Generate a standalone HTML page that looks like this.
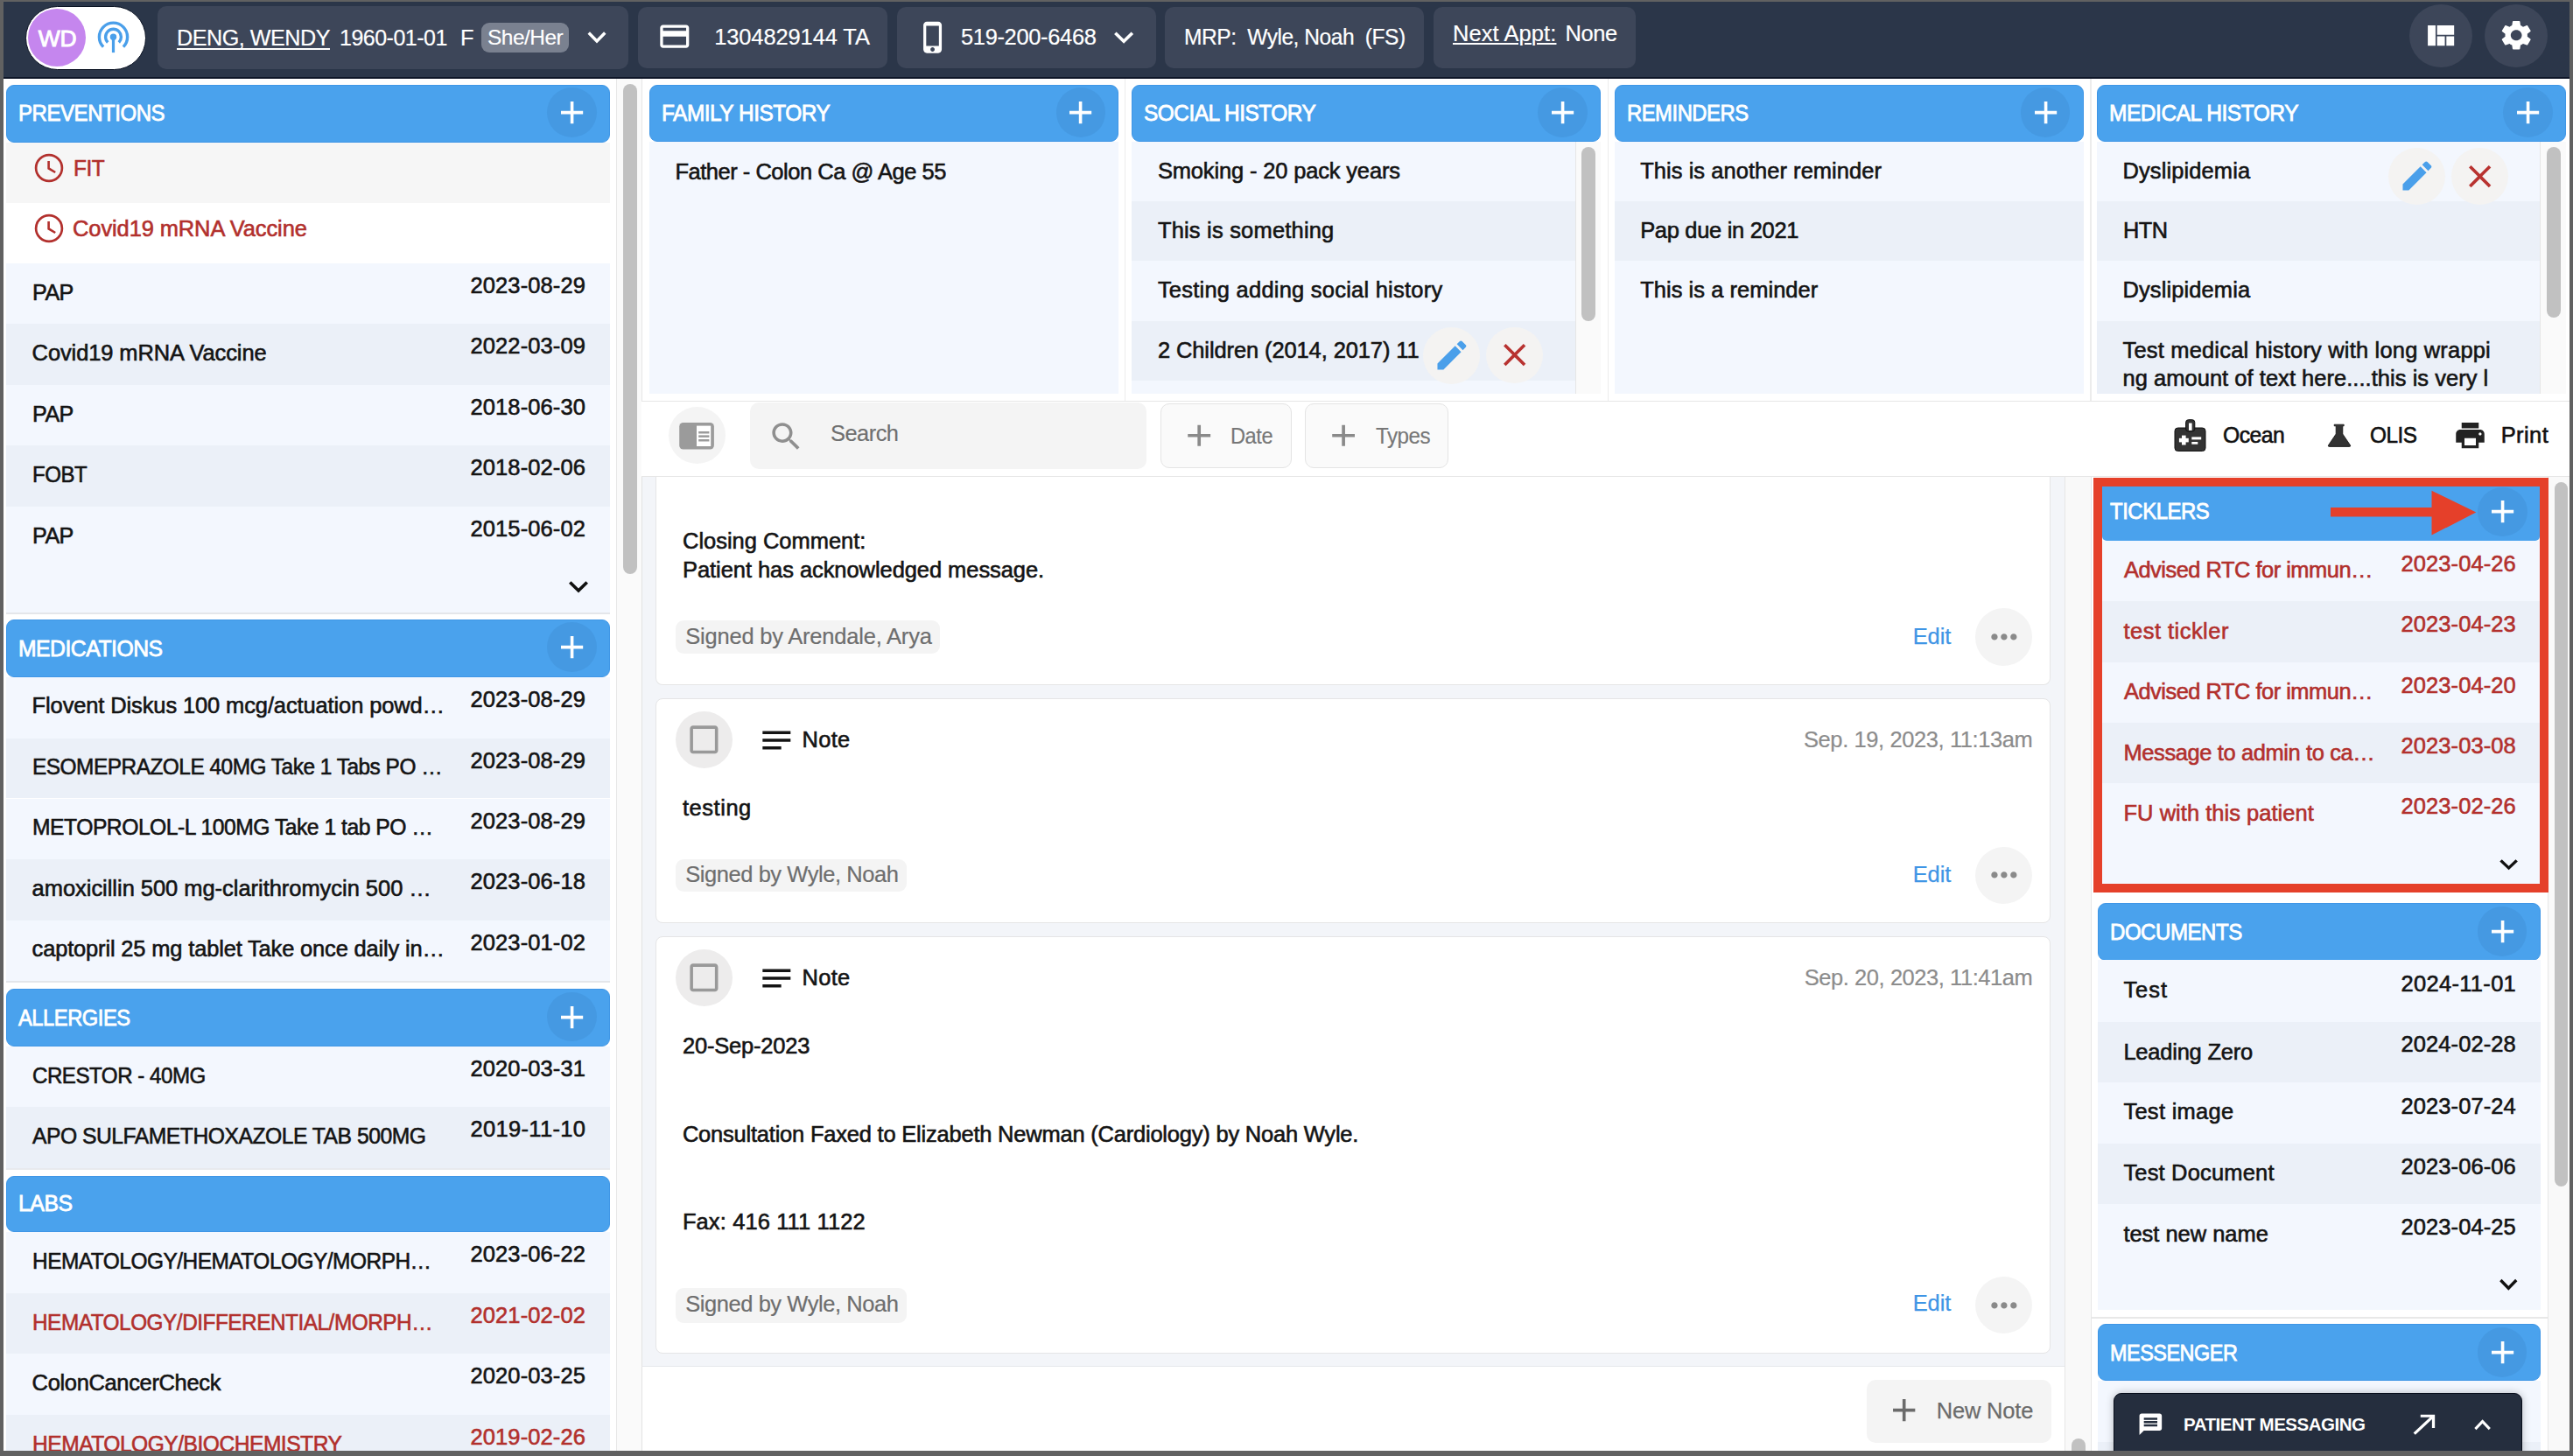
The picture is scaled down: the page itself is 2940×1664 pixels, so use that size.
<!DOCTYPE html><html><head><meta charset="utf-8"><style>*{box-sizing:border-box}html,body{margin:0;padding:0}body{width:2940px;height:1664px;overflow:hidden;position:relative;background:#616161;font-family:'Liberation Sans', sans-serif}
#app>div,#app>svg{position:absolute}.t{white-space:pre}</style></head><body><div id="app" style="position:absolute;left:0;top:0;width:2940px;height:1664px"><div style="left:0.00px;top:0.00px;width:2940.00px;height:1664.00px;background:#ffffff;"></div>
<div style="left:0.00px;top:0.00px;width:2940.00px;height:89.00px;background:#2b3649;"></div>
<div style="left:0.00px;top:88.00px;width:2940.00px;height:1.60px;background:#0e1628;"></div>
<div style="left:28.50px;top:6.50px;width:138.00px;height:73.00px;background:#ffffff;border-radius:37px;border:1px solid #0a1222;"></div>
<div style="left:32.00px;top:9.80px;width:66.00px;height:66.00px;background:#c586ee;border-radius:50%;"></div>
<div class="t" style="left:43.70px;top:30.71px;font-size:26.46px;line-height:26.46px;color:#ffffff;font-weight:400;-webkit-text-stroke:0.9px #ffffff;letter-spacing:-0.226px;">WD</div>
<svg style="left:105.00px;top:20.00px;width:50.00px;height:45.00px;overflow:visible;" viewBox="0 0 50.00 45.00"><g fill="none" stroke="#4a9fea" stroke-width="3.4"><path d="M 18.20 28.50 A 8.9 8.9 0 1 1 30.80 28.50"/><path d="M 13.10 33.60 A 16.1 16.1 0 1 1 35.90 33.60"/></g><circle cx="24.5" cy="22.2" r="3.7" fill="#4a9fea"/><rect x="22.9" y="22.2" width="3.2" height="17.9" fill="#4a9fea"/></svg>
<div style="left:180.00px;top:7.00px;width:537.50px;height:71.50px;background:#3d4659;border-radius:10px;"></div>
<div class="t" style="left:202.30px;top:30.94px;font-size:25.48px;line-height:25.48px;color:#ffffff;font-weight:400;-webkit-text-stroke:0.2px #ffffff;letter-spacing:-0.500px;transform:scaleX(0.9883);transform-origin:0 0;text-decoration:underline;text-decoration-thickness:2px;text-underline-offset:3px;">DENG, WENDY</div>
<div class="t" style="left:388.40px;top:30.64px;font-size:25.48px;line-height:25.48px;color:#ffffff;font-weight:400;-webkit-text-stroke:0.2px #ffffff;letter-spacing:-0.500px;transform:scaleX(0.9807);transform-origin:0 0;">1960-01-01</div>
<div class="t" style="left:526.00px;top:30.64px;font-size:25.48px;line-height:25.48px;color:#ffffff;font-weight:400;-webkit-text-stroke:0.2px #ffffff;">F</div>
<div style="left:550.00px;top:26.00px;width:100.00px;height:34.00px;background:#7a8190;border-radius:9px;"></div>
<div class="t" style="left:557.00px;top:31.47px;font-size:24.5px;line-height:24.5px;color:#ffffff;font-weight:400;-webkit-text-stroke:0.15px #ffffff;letter-spacing:-0.500px;transform:scaleX(0.9979);transform-origin:0 0;">She/Her</div>
<svg style="left:661.30px;top:21.20px;width:42.00px;height:42.75px;" viewBox="0 0 24 24" preserveAspectRatio="none"><path d="M16.59 8.59L12 13.17 7.41 8.59 6 10l6 6 6-6z" fill="#ffffff"/></svg>
<div style="left:729.00px;top:7.60px;width:284.50px;height:70.50px;background:#3d4659;border-radius:10px;"></div>
<svg style="left:750.70px;top:21.73px;width:39.60px;height:39.45px;" viewBox="0 0 24 24" preserveAspectRatio="none"><path d="M20 4H4c-1.11 0-1.99.89-1.99 2L2 18c0 1.11.89 2 2 2h16c1.11 0 2-.89 2-2V6c0-1.11-.89-2-2-2zm0 14H4v-6h16v6zm0-10H4V6h16v2z" fill="#ffffff"/></svg>
<div class="t" style="left:816.20px;top:29.94px;font-size:25.48px;line-height:25.48px;color:#ffffff;font-weight:400;-webkit-text-stroke:0.2px #ffffff;letter-spacing:-0.103px;">1304829144 TA</div>
<div style="left:1025.00px;top:7.60px;width:296.00px;height:70.50px;background:#3d4659;border-radius:10px;"></div>
<svg style="left:1046.72px;top:22.86px;width:38.77px;height:39.27px;" viewBox="0 0 24 24" preserveAspectRatio="none"><path d="M15.5 1h-8C6.12 1 5 2.12 5 3.5v17C5 21.88 6.12 23 7.5 23h8c1.38 0 2.5-1.12 2.5-2.5v-17C18 2.12 16.88 1 15.5 1zm-4 21c-.83 0-1.5-.67-1.5-1.5s.67-1.5 1.5-1.5 1.5.67 1.5 1.5-.67 1.5-1.5 1.5zm4.5-4H7V4h9v14z" fill="#ffffff"/></svg>
<div class="t" style="left:1098.00px;top:29.94px;font-size:25.48px;line-height:25.48px;color:#ffffff;font-weight:400;-webkit-text-stroke:0.2px #ffffff;letter-spacing:-0.339px;">519-200-6468</div>
<svg style="left:1262.15px;top:20.78px;width:44.20px;height:43.08px;" viewBox="0 0 24 24" preserveAspectRatio="none"><path d="M16.59 8.59L12 13.17 7.41 8.59 6 10l6 6 6-6z" fill="#ffffff"/></svg>
<div style="left:1331.00px;top:7.60px;width:296.00px;height:70.50px;background:#3d4659;border-radius:10px;"></div>
<div class="t" style="left:1353.20px;top:29.94px;font-size:25.48px;line-height:25.48px;color:#ffffff;font-weight:400;-webkit-text-stroke:0.2px #ffffff;letter-spacing:-0.500px;transform:scaleX(0.9646);transform-origin:0 0;">MRP:  Wyle, Noah  (FS)</div>
<div style="left:1638.00px;top:8.00px;width:231.00px;height:70.00px;background:#3d4659;border-radius:10px;"></div>
<div class="t" style="left:1660.00px;top:25.64px;font-size:25.48px;line-height:25.48px;color:#ffffff;font-weight:400;-webkit-text-stroke:0.2px #ffffff;letter-spacing:0.096px;text-decoration:underline;text-decoration-thickness:2px;text-underline-offset:2px;">Next Appt:</div>
<div class="t" style="left:1788.60px;top:25.64px;font-size:25.48px;line-height:25.48px;color:#ffffff;font-weight:400;-webkit-text-stroke:0.2px #ffffff;letter-spacing:-0.436px;">None</div>
<div style="left:2753.00px;top:5.00px;width:72.00px;height:72.00px;background:#3d4659;border-radius:50%;"></div>
<svg style="left:2766.72px;top:19.84px;width:42.49px;height:43.02px;" viewBox="0 0 24 24" preserveAspectRatio="none"><path d="M10 18h5v-6h-5v6zm-6 0h5V5H4v13zm12 0h5v-6h-5v6zM10 5v6h11V5H10z" fill="#ffffff"/></svg>
<div style="left:2839.00px;top:5.00px;width:72.00px;height:72.00px;background:#3d4659;border-radius:50%;"></div>
<svg style="left:2853.66px;top:19.92px;width:42.38px;height:40.56px;" viewBox="0 0 24 24" preserveAspectRatio="none"><path d="M19.14 12.94c.04-.3.06-.61.06-.94 0-.32-.02-.64-.07-.94l2.03-1.58c.18-.14.23-.41.12-.61l-1.92-3.32c-.12-.22-.37-.29-.59-.22l-2.39.96c-.5-.38-1.03-.7-1.62-.94l-.36-2.54c-.04-.24-.24-.41-.48-.41h-3.84c-.24 0-.43.17-.47.41l-.36 2.54c-.59.24-1.13.57-1.62.94l-2.39-.96c-.22-.08-.47 0-.59.22L2.74 8.87c-.12.21-.08.47.12.61l2.03 1.58c-.05.3-.09.63-.09.94s.02.64.07.94l-2.03 1.58c-.18.14-.23.41-.12.61l1.92 3.32c.12.22.37.29.59.22l2.39-.96c.5.38 1.03.7 1.62.94l.36 2.54c.05.24.24.41.48.41h3.84c.24 0 .44-.17.47-.41l.36-2.54c.59-.24 1.13-.56 1.62-.94l2.39.96c.22.08.47 0 .59-.22l1.92-3.32c.12-.22.07-.47-.12-.61l-2.01-1.58zM12 15.6c-1.98 0-3.6-1.62-3.6-3.6s1.62-3.6 3.6-3.6 3.6 1.62 3.6 3.6-1.62 3.6-3.6 3.6z" fill="#ffffff"/></svg>
<div style="left:7.00px;top:97.00px;width:690.00px;height:66.00px;background:#4aa2ed;border-radius:9px;border:1px solid #3f96e6;"></div>
<div class="t" style="left:21.30px;top:116.64px;font-size:25.48px;line-height:25.48px;color:#ffffff;font-weight:400;-webkit-text-stroke:0.8px #ffffff;letter-spacing:-0.500px;transform:scaleX(0.9438);transform-origin:0 0;">PREVENTIONS</div>
<div style="left:625.30px;top:100.30px;width:56.80px;height:56.80px;background:#4599e2;border-radius:50%;"></div>
<svg style="left:632.10px;top:107.10px;width:43.20px;height:43.20px;" viewBox="0 0 24 24" preserveAspectRatio="none"><path d="M19 13h-6v6h-2v-6H5v-2h6V5h2v6h6v2z" fill="#ffffff"/></svg>
<div style="left:7.00px;top:163.00px;width:690.00px;height:69.00px;background:#f6f6f6;"></div>
<div style="left:7.00px;top:232.00px;width:690.00px;height:69.00px;background:#ffffff;"></div>
<div style="left:7.00px;top:301.00px;width:690.00px;height:69.00px;background:#f3f7fe;"></div>
<div style="left:7.00px;top:370.00px;width:690.00px;height:70.00px;background:#ebf0f8;"></div>
<div style="left:7.00px;top:440.00px;width:690.00px;height:69.00px;background:#f3f7fe;"></div>
<div style="left:7.00px;top:509.00px;width:690.00px;height:70.00px;background:#ebf0f8;"></div>
<div style="left:7.00px;top:579.00px;width:690.00px;height:121.00px;background:#f3f7fe;"></div>
<div style="left:7.00px;top:700.00px;width:690.00px;height:1.50px;background:#e4e6ea;"></div>
<svg style="left:38.70px;top:175.30px;width:34.00px;height:34.00px;overflow:visible;" viewBox="0 0 34.00 34.00"><circle cx="17" cy="17" r="14.9" fill="none" stroke="#b2302d" stroke-width="2.7"/><path d="M16.6 9 V17.4 L24.2 22" fill="none" stroke="#b2302d" stroke-width="2.6"/></svg>
<div class="t" style="left:84.10px;top:180.44px;font-size:25.48px;line-height:25.48px;color:#b2302d;font-weight:400;-webkit-text-stroke:0.6px #b2302d;letter-spacing:-0.500px;transform:scaleX(0.9599);transform-origin:0 0;">FIT</div>
<svg style="left:38.70px;top:244.20px;width:34.00px;height:34.00px;overflow:visible;" viewBox="0 0 34.00 34.00"><circle cx="17" cy="17" r="14.9" fill="none" stroke="#b2302d" stroke-width="2.7"/><path d="M16.6 9 V17.4 L24.2 22" fill="none" stroke="#b2302d" stroke-width="2.6"/></svg>
<div class="t" style="left:83.10px;top:249.44px;font-size:25.48px;line-height:25.48px;color:#b2302d;font-weight:400;-webkit-text-stroke:0.6px #b2302d;letter-spacing:-0.112px;">Covid19 mRNA Vaccine</div>
<div class="t" style="left:36.60px;top:322.44px;font-size:25.48px;line-height:25.48px;color:#141414;font-weight:400;-webkit-text-stroke:0.6px #141414;letter-spacing:-0.500px;transform:scaleX(0.9850);transform-origin:0 0;">PAP</div>
<div class="t" style="left:537.40px;top:314.44px;font-size:25.48px;line-height:25.48px;color:#141414;font-weight:400;-webkit-text-stroke:0.6px #141414;letter-spacing:0.145px;">2023-08-29</div>
<div class="t" style="left:36.60px;top:391.44px;font-size:25.48px;line-height:25.48px;color:#141414;font-weight:400;-webkit-text-stroke:0.6px #141414;letter-spacing:-0.096px;">Covid19 mRNA Vaccine</div>
<div class="t" style="left:537.40px;top:383.44px;font-size:25.48px;line-height:25.48px;color:#141414;font-weight:400;-webkit-text-stroke:0.6px #141414;letter-spacing:0.145px;">2022-03-09</div>
<div class="t" style="left:36.60px;top:461.44px;font-size:25.48px;line-height:25.48px;color:#141414;font-weight:400;-webkit-text-stroke:0.6px #141414;letter-spacing:-0.500px;transform:scaleX(0.9850);transform-origin:0 0;">PAP</div>
<div class="t" style="left:537.40px;top:453.44px;font-size:25.48px;line-height:25.48px;color:#141414;font-weight:400;-webkit-text-stroke:0.6px #141414;letter-spacing:0.145px;">2018-06-30</div>
<div class="t" style="left:36.60px;top:530.44px;font-size:25.48px;line-height:25.48px;color:#141414;font-weight:400;-webkit-text-stroke:0.6px #141414;letter-spacing:-0.500px;transform:scaleX(0.9422);transform-origin:0 0;">FOBT</div>
<div class="t" style="left:537.40px;top:522.44px;font-size:25.48px;line-height:25.48px;color:#141414;font-weight:400;-webkit-text-stroke:0.6px #141414;letter-spacing:0.145px;">2018-02-06</div>
<div class="t" style="left:36.60px;top:600.44px;font-size:25.48px;line-height:25.48px;color:#141414;font-weight:400;-webkit-text-stroke:0.6px #141414;letter-spacing:-0.500px;transform:scaleX(0.9850);transform-origin:0 0;">PAP</div>
<div class="t" style="left:537.40px;top:592.44px;font-size:25.48px;line-height:25.48px;color:#141414;font-weight:400;-webkit-text-stroke:0.6px #141414;letter-spacing:0.145px;">2015-06-02</div>
<svg style="left:638.80px;top:648.90px;width:44.00px;height:42.75px;" viewBox="0 0 24 24" preserveAspectRatio="none"><path d="M16.59 8.59L12 13.17 7.41 8.59 6 10l6 6 6-6z" fill="#111111"/></svg>
<div style="left:7.00px;top:708.00px;width:690.00px;height:66.00px;background:#4aa2ed;border-radius:9px;border:1px solid #3f96e6;"></div>
<div class="t" style="left:21.30px;top:728.74px;font-size:25.48px;line-height:25.48px;color:#ffffff;font-weight:400;-webkit-text-stroke:0.8px #ffffff;letter-spacing:-0.500px;transform:scaleX(0.9708);transform-origin:0 0;">MEDICATIONS</div>
<div style="left:625.30px;top:711.30px;width:56.80px;height:56.80px;background:#4599e2;border-radius:50%;"></div>
<svg style="left:632.10px;top:718.10px;width:43.20px;height:43.20px;" viewBox="0 0 24 24" preserveAspectRatio="none"><path d="M19 13h-6v6h-2v-6H5v-2h6V5h2v6h6v2z" fill="#ffffff"/></svg>
<div style="left:7.00px;top:774.00px;width:690.00px;height:69.90px;background:#f3f7fe;"></div>
<div style="left:7.00px;top:843.90px;width:690.00px;height:68.60px;background:#ebf0f8;"></div>
<div style="left:7.00px;top:912.50px;width:690.00px;height:69.80px;background:#f3f7fe;"></div>
<div style="left:7.00px;top:982.30px;width:690.00px;height:69.30px;background:#ebf0f8;"></div>
<div style="left:7.00px;top:1051.60px;width:690.00px;height:69.40px;background:#f3f7fe;"></div>
<div class="t" style="left:36.60px;top:794.44px;font-size:25.48px;line-height:25.48px;color:#141414;font-weight:400;-webkit-text-stroke:0.6px #141414;letter-spacing:-0.113px;">Flovent Diskus 100 mcg/actuation powd…</div>
<div class="t" style="left:537.40px;top:787.14px;font-size:25.48px;line-height:25.48px;color:#141414;font-weight:400;-webkit-text-stroke:0.6px #141414;letter-spacing:0.145px;">2023-08-29</div>
<div class="t" style="left:36.60px;top:864.34px;font-size:25.48px;line-height:25.48px;color:#141414;font-weight:400;-webkit-text-stroke:0.6px #141414;letter-spacing:-0.500px;transform:scaleX(0.9577);transform-origin:0 0;">ESOMEPRAZOLE 40MG Take 1 Tabs PO …</div>
<div class="t" style="left:537.40px;top:857.04px;font-size:25.48px;line-height:25.48px;color:#141414;font-weight:400;-webkit-text-stroke:0.6px #141414;letter-spacing:0.145px;">2023-08-29</div>
<div class="t" style="left:36.60px;top:932.94px;font-size:25.48px;line-height:25.48px;color:#141414;font-weight:400;-webkit-text-stroke:0.6px #141414;letter-spacing:-0.500px;transform:scaleX(0.9686);transform-origin:0 0;">METOPROLOL-L 100MG Take 1 tab PO …</div>
<div class="t" style="left:537.40px;top:925.64px;font-size:25.48px;line-height:25.48px;color:#141414;font-weight:400;-webkit-text-stroke:0.6px #141414;letter-spacing:0.145px;">2023-08-29</div>
<div class="t" style="left:36.60px;top:1002.74px;font-size:25.48px;line-height:25.48px;color:#141414;font-weight:400;-webkit-text-stroke:0.6px #141414;letter-spacing:-0.026px;">amoxicillin 500 mg-clarithromycin 500 …</div>
<div class="t" style="left:537.40px;top:995.44px;font-size:25.48px;line-height:25.48px;color:#141414;font-weight:400;-webkit-text-stroke:0.6px #141414;letter-spacing:0.145px;">2023-06-18</div>
<div class="t" style="left:36.60px;top:1072.04px;font-size:25.48px;line-height:25.48px;color:#141414;font-weight:400;-webkit-text-stroke:0.6px #141414;letter-spacing:-0.160px;">captopril 25 mg tablet Take once daily in…</div>
<div class="t" style="left:537.40px;top:1064.74px;font-size:25.48px;line-height:25.48px;color:#141414;font-weight:400;-webkit-text-stroke:0.6px #141414;letter-spacing:0.145px;">2023-01-02</div>
<div style="left:7.00px;top:1121.00px;width:690.00px;height:1.50px;background:#e4e6ea;"></div>
<div style="left:7.00px;top:1130.40px;width:690.00px;height:65.50px;background:#4aa2ed;border-radius:9px;border:1px solid #3f96e6;"></div>
<div class="t" style="left:21.30px;top:1150.64px;font-size:25.48px;line-height:25.48px;color:#ffffff;font-weight:400;-webkit-text-stroke:0.8px #ffffff;letter-spacing:-0.500px;transform:scaleX(0.9309);transform-origin:0 0;">ALLERGIES</div>
<div style="left:625.30px;top:1133.70px;width:56.80px;height:56.80px;background:#4599e2;border-radius:50%;"></div>
<svg style="left:632.10px;top:1140.50px;width:43.20px;height:43.20px;" viewBox="0 0 24 24" preserveAspectRatio="none"><path d="M19 13h-6v6h-2v-6H5v-2h6V5h2v6h6v2z" fill="#ffffff"/></svg>
<div style="left:7.00px;top:1196.00px;width:690.00px;height:69.00px;background:#f3f7fe;"></div>
<div style="left:7.00px;top:1265.00px;width:690.00px;height:70.20px;background:#ebf0f8;"></div>
<div class="t" style="left:36.60px;top:1216.64px;font-size:25.48px;line-height:25.48px;color:#141414;font-weight:400;-webkit-text-stroke:0.6px #141414;letter-spacing:-0.500px;transform:scaleX(0.9462);transform-origin:0 0;">CRESTOR - 40MG</div>
<div class="t" style="left:537.40px;top:1209.44px;font-size:25.48px;line-height:25.48px;color:#141414;font-weight:400;-webkit-text-stroke:0.6px #141414;letter-spacing:0.145px;">2020-03-31</div>
<div class="t" style="left:36.60px;top:1285.64px;font-size:25.48px;line-height:25.48px;color:#141414;font-weight:400;-webkit-text-stroke:0.6px #141414;letter-spacing:-0.500px;transform:scaleX(0.9689);transform-origin:0 0;">APO SULFAMETHOXAZOLE TAB 500MG</div>
<div class="t" style="left:537.40px;top:1278.44px;font-size:25.48px;line-height:25.48px;color:#141414;font-weight:400;-webkit-text-stroke:0.6px #141414;letter-spacing:0.355px;">2019-11-10</div>
<div style="left:7.00px;top:1335.20px;width:690.00px;height:1.50px;background:#e8eaee;"></div>
<div style="left:7.00px;top:1343.50px;width:690.00px;height:64.50px;background:#4aa2ed;border-radius:9px;border:1px solid #3f96e6;"></div>
<div class="t" style="left:21.30px;top:1362.74px;font-size:25.48px;line-height:25.48px;color:#ffffff;font-weight:400;-webkit-text-stroke:0.8px #ffffff;letter-spacing:-0.500px;transform:scaleX(0.9748);transform-origin:0 0;">LABS</div>
<div style="left:7.00px;top:1407.50px;width:690.00px;height:70.10px;background:#f3f7fe;"></div>
<div style="left:7.00px;top:1477.60px;width:690.00px;height:69.40px;background:#ebf0f8;"></div>
<div style="left:7.00px;top:1547.00px;width:690.00px;height:70.00px;background:#f3f7fe;"></div>
<div style="left:7.00px;top:1617.00px;width:690.00px;height:73.00px;background:#ebf0f8;"></div>
<div class="t" style="left:36.60px;top:1428.64px;font-size:25.48px;line-height:25.48px;color:#141414;font-weight:400;-webkit-text-stroke:0.6px #141414;letter-spacing:-0.500px;transform:scaleX(0.9587);transform-origin:0 0;">HEMATOLOGY/HEMATOLOGY/MORPH…</div>
<div class="t" style="left:537.40px;top:1420.94px;font-size:25.48px;line-height:25.48px;color:#141414;font-weight:400;-webkit-text-stroke:0.6px #141414;letter-spacing:0.145px;">2023-06-22</div>
<div class="t" style="left:36.60px;top:1498.74px;font-size:25.48px;line-height:25.48px;color:#b2302d;font-weight:400;-webkit-text-stroke:0.6px #b2302d;letter-spacing:-0.500px;transform:scaleX(0.9563);transform-origin:0 0;">HEMATOLOGY/DIFFERENTIAL/MORPH…</div>
<div class="t" style="left:537.40px;top:1491.04px;font-size:25.48px;line-height:25.48px;color:#b2302d;font-weight:400;-webkit-text-stroke:0.6px #b2302d;letter-spacing:0.145px;">2021-02-02</div>
<div class="t" style="left:36.60px;top:1568.14px;font-size:25.48px;line-height:25.48px;color:#141414;font-weight:400;-webkit-text-stroke:0.6px #141414;letter-spacing:-0.337px;">ColonCancerCheck</div>
<div class="t" style="left:537.40px;top:1560.44px;font-size:25.48px;line-height:25.48px;color:#141414;font-weight:400;-webkit-text-stroke:0.6px #141414;letter-spacing:0.145px;">2020-03-25</div>
<div class="t" style="left:36.60px;top:1638.14px;font-size:25.48px;line-height:25.48px;color:#b2302d;font-weight:400;-webkit-text-stroke:0.6px #b2302d;letter-spacing:-0.500px;transform:scaleX(0.9645);transform-origin:0 0;">HEMATOLOGY/BIOCHEMISTRY</div>
<div class="t" style="left:537.40px;top:1630.44px;font-size:25.48px;line-height:25.48px;color:#b2302d;font-weight:400;-webkit-text-stroke:0.6px #b2302d;letter-spacing:0.145px;">2019-02-26</div>
<div style="left:703.80px;top:90.00px;width:30.00px;height:1568.00px;background:#fafafa;border-left:1.6px solid #e6e6e6;border-right:1.6px solid #e6e6e6;"></div>
<div style="left:712.00px;top:96.00px;width:16.00px;height:559.60px;background:#c1c1c1;border-radius:8px;"></div>
<div style="left:734.50px;top:90.00px;width:2201.50px;height:368.00px;background:#ffffff;"></div>
<div style="left:742.00px;top:97.00px;width:536.00px;height:65.00px;background:#4aa2ed;border-radius:9px;border:1px solid #3f96e6;"></div>
<div class="t" style="left:756.30px;top:116.74px;font-size:25.48px;line-height:25.48px;color:#ffffff;font-weight:400;-webkit-text-stroke:0.8px #ffffff;letter-spacing:-0.500px;transform:scaleX(0.9588);transform-origin:0 0;">FAMILY HISTORY</div>
<div style="left:1206.50px;top:100.20px;width:56.80px;height:56.80px;background:#4599e2;border-radius:50%;"></div>
<svg style="left:1213.30px;top:107.00px;width:43.20px;height:43.20px;" viewBox="0 0 24 24" preserveAspectRatio="none"><path d="M19 13h-6v6h-2v-6H5v-2h6V5h2v6h6v2z" fill="#ffffff"/></svg>
<div style="left:742.00px;top:162.00px;width:536.00px;height:287.50px;background:#f3f7fe;"></div>
<div class="t" style="left:771.40px;top:183.84px;font-size:25.48px;line-height:25.48px;color:#141414;font-weight:400;-webkit-text-stroke:0.6px #141414;letter-spacing:-0.467px;">Father - Colon Ca @ Age 55</div>
<div style="left:1284.50px;top:90.00px;width:1.50px;height:368.00px;background:#ececec;"></div>
<div style="left:1293.00px;top:97.00px;width:536.00px;height:64.50px;background:#4aa2ed;border-radius:9px;border:1px solid #3f96e6;"></div>
<div class="t" style="left:1307.30px;top:116.74px;font-size:25.48px;line-height:25.48px;color:#ffffff;font-weight:400;-webkit-text-stroke:0.8px #ffffff;letter-spacing:-0.500px;transform:scaleX(0.9579);transform-origin:0 0;">SOCIAL HISTORY</div>
<div style="left:1757.40px;top:100.20px;width:56.80px;height:56.80px;background:#4599e2;border-radius:50%;"></div>
<svg style="left:1764.20px;top:107.00px;width:43.20px;height:43.20px;" viewBox="0 0 24 24" preserveAspectRatio="none"><path d="M19 13h-6v6h-2v-6H5v-2h6V5h2v6h6v2z" fill="#ffffff"/></svg>
<div style="left:1293.00px;top:161.50px;width:507.00px;height:68.00px;background:#f3f7fe;"></div>
<div style="left:1293.00px;top:229.50px;width:507.00px;height:68.30px;background:#ebf0f8;"></div>
<div style="left:1293.00px;top:297.80px;width:507.00px;height:68.80px;background:#f3f7fe;"></div>
<div style="left:1293.00px;top:366.60px;width:507.00px;height:68.40px;background:#ebf0f8;"></div>
<div style="left:1293.00px;top:435.00px;width:507.00px;height:14.70px;background:#f3f7fe;"></div>
<div style="left:1800.00px;top:161.50px;width:28.50px;height:288.20px;background:#fafafa;border-left:1.5px solid #e6e6e6;"></div>
<div style="left:1807.00px;top:168.40px;width:16.00px;height:199.00px;background:#c1c1c1;border-radius:8px;"></div>
<div class="t" style="left:1322.90px;top:182.84px;font-size:25.48px;line-height:25.48px;color:#141414;font-weight:400;-webkit-text-stroke:0.6px #141414;letter-spacing:-0.145px;">Smoking - 20 pack years</div>
<div class="t" style="left:1322.90px;top:250.64px;font-size:25.48px;line-height:25.48px;color:#141414;font-weight:400;-webkit-text-stroke:0.6px #141414;letter-spacing:0.201px;">This is something</div>
<div class="t" style="left:1322.90px;top:318.94px;font-size:25.48px;line-height:25.48px;color:#141414;font-weight:400;-webkit-text-stroke:0.6px #141414;letter-spacing:0.241px;">Testing adding social history</div>
<div class="t" style="left:1322.90px;top:387.84px;font-size:25.48px;line-height:25.48px;color:#141414;font-weight:400;-webkit-text-stroke:0.6px #141414;letter-spacing:-0.094px;">2 Children (2014, 2017) 11</div>
<div style="left:1626.00px;top:373.50px;width:65.00px;height:65.00px;background:#f4f3f2;border-radius:50%;"></div>
<svg style="left:1636.52px;top:383.82px;width:43.87px;height:43.87px;" viewBox="0 0 24 24" preserveAspectRatio="none"><path d="M3 17.25V21h3.75L17.81 9.94l-3.75-3.75L3 17.25zM20.71 7.04c.39-.39.39-1.02 0-1.41l-2.34-2.34c-.39-.39-1.02-.39-1.41 0l-1.83 1.83 3.75 3.75 1.83-1.83z" fill="#4a9fea"/></svg>
<div style="left:1698.40px;top:373.60px;width:64.80px;height:64.80px;background:#f4f3f2;border-radius:50%;"></div>
<svg style="left:1709.06px;top:384.40px;width:43.37px;height:43.20px;" viewBox="0 0 24 24" preserveAspectRatio="none"><path d="M19 6.41L17.59 5 12 10.59 6.41 5 5 6.41 10.59 12 5 17.59 6.41 19 12 13.41 17.59 19 19 17.59 13.41 12z" fill="#b83230"/></svg>
<div style="left:1836.50px;top:90.00px;width:1.50px;height:368.00px;background:#ececec;"></div>
<div style="left:1845.00px;top:97.00px;width:536.00px;height:64.50px;background:#4aa2ed;border-radius:9px;border:1px solid #3f96e6;"></div>
<div class="t" style="left:1859.30px;top:116.74px;font-size:25.48px;line-height:25.48px;color:#ffffff;font-weight:400;-webkit-text-stroke:0.8px #ffffff;letter-spacing:-0.500px;transform:scaleX(0.9344);transform-origin:0 0;">REMINDERS</div>
<div style="left:2308.70px;top:100.20px;width:56.80px;height:56.80px;background:#4599e2;border-radius:50%;"></div>
<svg style="left:2315.50px;top:107.00px;width:43.20px;height:43.20px;" viewBox="0 0 24 24" preserveAspectRatio="none"><path d="M19 13h-6v6h-2v-6H5v-2h6V5h2v6h6v2z" fill="#ffffff"/></svg>
<div style="left:1845.00px;top:161.50px;width:536.00px;height:288.20px;background:#f3f7fe;"></div>
<div style="left:1845.00px;top:229.50px;width:536.00px;height:68.30px;background:#ebf0f8;"></div>
<div class="t" style="left:1874.20px;top:182.84px;font-size:25.48px;line-height:25.48px;color:#141414;font-weight:400;-webkit-text-stroke:0.6px #141414;letter-spacing:0.050px;">This is another reminder</div>
<div class="t" style="left:1874.20px;top:250.64px;font-size:25.48px;line-height:25.48px;color:#141414;font-weight:400;-webkit-text-stroke:0.6px #141414;letter-spacing:-0.303px;">Pap due in 2021</div>
<div class="t" style="left:1874.20px;top:318.94px;font-size:25.48px;line-height:25.48px;color:#141414;font-weight:400;-webkit-text-stroke:0.6px #141414;letter-spacing:0.040px;">This is a reminder</div>
<div style="left:2388.00px;top:90.00px;width:1.50px;height:368.00px;background:#ececec;"></div>
<div style="left:2396.00px;top:97.00px;width:536.00px;height:64.50px;background:#4aa2ed;border-radius:9px;border:1px solid #3f96e6;"></div>
<div class="t" style="left:2410.30px;top:116.74px;font-size:25.48px;line-height:25.48px;color:#ffffff;font-weight:400;-webkit-text-stroke:0.8px #ffffff;letter-spacing:-0.500px;transform:scaleX(0.9638);transform-origin:0 0;">MEDICAL HISTORY</div>
<div style="left:2859.90px;top:100.20px;width:56.80px;height:56.80px;background:#4599e2;border-radius:50%;"></div>
<svg style="left:2866.70px;top:107.00px;width:43.20px;height:43.20px;" viewBox="0 0 24 24" preserveAspectRatio="none"><path d="M19 13h-6v6h-2v-6H5v-2h6V5h2v6h6v2z" fill="#ffffff"/></svg>
<div style="left:2396.00px;top:161.50px;width:506.00px;height:68.00px;background:#f3f7fe;"></div>
<div style="left:2396.00px;top:229.50px;width:506.00px;height:68.30px;background:#ebf0f8;"></div>
<div style="left:2396.00px;top:297.80px;width:506.00px;height:68.80px;background:#f3f7fe;"></div>
<div style="left:2396.00px;top:366.60px;width:506.00px;height:83.10px;background:#ebf0f8;"></div>
<div style="left:2902.00px;top:161.50px;width:30.00px;height:288.20px;background:#fafafa;border-left:1.5px solid #e6e6e6;"></div>
<div style="left:2909.70px;top:168.00px;width:16.00px;height:194.50px;background:#c1c1c1;border-radius:8px;"></div>
<div class="t" style="left:2425.50px;top:182.84px;font-size:25.48px;line-height:25.48px;color:#141414;font-weight:400;-webkit-text-stroke:0.6px #141414;letter-spacing:0.110px;">Dyslipidemia</div>
<div class="t" style="left:2425.50px;top:250.64px;font-size:25.48px;line-height:25.48px;color:#141414;font-weight:400;-webkit-text-stroke:0.6px #141414;letter-spacing:-0.500px;transform:scaleX(0.9948);transform-origin:0 0;">HTN</div>
<div class="t" style="left:2425.50px;top:318.94px;font-size:25.48px;line-height:25.48px;color:#141414;font-weight:400;-webkit-text-stroke:0.6px #141414;letter-spacing:0.110px;">Dyslipidemia</div>
<div class="t" style="left:2425.50px;top:387.64px;font-size:25.48px;line-height:25.48px;color:#141414;font-weight:400;-webkit-text-stroke:0.6px #141414;letter-spacing:0.193px;">Test medical history with long wrappi</div>
<div class="t" style="left:2425.50px;top:419.94px;font-size:25.48px;line-height:25.48px;color:#141414;font-weight:400;-webkit-text-stroke:0.6px #141414;letter-spacing:0.041px;">ng amount of text here....this is very l</div>
<div style="left:2729.10px;top:169.00px;width:65.00px;height:65.00px;background:#f4f3f2;border-radius:50%;"></div>
<svg style="left:2739.62px;top:179.32px;width:43.87px;height:43.87px;" viewBox="0 0 24 24" preserveAspectRatio="none"><path d="M3 17.25V21h3.75L17.81 9.94l-3.75-3.75L3 17.25zM20.71 7.04c.39-.39.39-1.02 0-1.41l-2.34-2.34c-.39-.39-1.02-.39-1.41 0l-1.83 1.83 3.75 3.75 1.83-1.83z" fill="#4a9fea"/></svg>
<div style="left:2801.00px;top:169.10px;width:64.80px;height:64.80px;background:#f4f3f2;border-radius:50%;"></div>
<svg style="left:2811.66px;top:179.90px;width:43.37px;height:43.20px;" viewBox="0 0 24 24" preserveAspectRatio="none"><path d="M19 6.41L17.59 5 12 10.59 6.41 5 5 6.41 10.59 12 5 17.59 6.41 19 12 13.41 17.59 19 19 17.59 13.41 12z" fill="#b83230"/></svg>
<div style="left:733.00px;top:457.50px;width:2203.00px;height:1.50px;background:#e6e6e6;"></div>
<div style="left:733.00px;top:459.00px;width:2203.00px;height:85.00px;background:#ffffff;"></div>
<div style="left:764.10px;top:465.00px;width:65.00px;height:65.00px;background:#f4f4f4;border-radius:50%;"></div>
<svg style="left:776.00px;top:483.00px;width:40.00px;height:31.00px;overflow:visible;" viewBox="0 0 40.00 31.00"><rect x="0.2" y="0" width="39.7" height="30.6" rx="4.5" fill="#9b9b9b"/><rect x="20" y="3.6" width="16.2" height="23.4" fill="#ffffff"/><rect x="22.2" y="10" width="12.2" height="2.5" fill="#9b9b9b"/><rect x="22.2" y="14.4" width="12.2" height="2.5" fill="#9b9b9b"/><rect x="22.2" y="19" width="12.2" height="2.5" fill="#9b9b9b"/></svg>
<div style="left:857.00px;top:459.50px;width:453.40px;height:76.50px;background:#f4f4f4;border-radius:10px;"></div>
<svg style="left:876.55px;top:478.27px;width:42.81px;height:41.85px;" viewBox="0 0 24 24" preserveAspectRatio="none"><path d="M15.5 14h-.79l-.28-.27C15.41 12.59 16 11.11 16 9.5 16 5.91 13.09 3 9.5 3S3 5.91 3 9.5 5.91 16 9.5 16c1.61 0 3.09-.59 4.23-1.57l.27.28v.79l5 4.99L20.49 19l-4.99-5zm-6 0C7.01 14 5 11.99 5 9.5S7.01 5 9.5 5 14 7.01 14 9.5 11.99 14 9.5 14z" fill="#8f8f8f"/></svg>
<div class="t" style="left:948.50px;top:482.94px;font-size:25.48px;line-height:25.48px;color:#6f6f6f;font-weight:400;-webkit-text-stroke:0.15px #6f6f6f;letter-spacing:-0.500px;transform:scaleX(0.9971);transform-origin:0 0;">Search</div>
<div style="left:1326.40px;top:461.40px;width:150.00px;height:73.20px;background:#fafafa;border:1.5px solid #e4e4e4;border-radius:10px;"></div>
<svg style="left:1347.55px;top:477.36px;width:44.40px;height:41.49px;" viewBox="0 0 24 24" preserveAspectRatio="none"><path d="M19 13h-6v6h-2v-6H5v-2h6V5h2v6h6v2z" fill="#8a8a8a"/></svg>
<div class="t" style="left:1406.30px;top:485.64px;font-size:25.48px;line-height:25.48px;color:#777777;font-weight:400;-webkit-text-stroke:0.15px #777777;letter-spacing:-0.500px;transform:scaleX(0.9282);transform-origin:0 0;">Date</div>
<div style="left:1491.30px;top:461.40px;width:164.10px;height:73.20px;background:#fafafa;border:1.5px solid #e4e4e4;border-radius:10px;"></div>
<svg style="left:1512.59px;top:477.36px;width:44.23px;height:41.49px;" viewBox="0 0 24 24" preserveAspectRatio="none"><path d="M19 13h-6v6h-2v-6H5v-2h6V5h2v6h6v2z" fill="#8a8a8a"/></svg>
<div class="t" style="left:1572.00px;top:485.64px;font-size:25.48px;line-height:25.48px;color:#777777;font-weight:400;-webkit-text-stroke:0.15px #777777;letter-spacing:-0.500px;transform:scaleX(0.9506);transform-origin:0 0;">Types</div>
<svg style="left:2484.00px;top:478.50px;width:38.00px;height:38.00px;overflow:visible;" viewBox="0 0 38.00 38.00"><rect x="1" y="10" width="35" height="26.5" rx="3.5" fill="#333333" stroke="#111" stroke-width="1"/><rect x="13.6" y="0.7" width="10.2" height="13.4" rx="3" fill="#333333" stroke="#111" stroke-width="1"/><rect x="17" y="4.5" width="3.6" height="8.4" fill="#ffffff"/><rect x="5.9" y="21.8" width="10.9" height="4.6" fill="#ffffff"/><rect x="9" y="18.6" width="4.6" height="10.9" fill="#ffffff"/><rect x="20.3" y="20.4" width="10.9" height="3" fill="#ffffff"/><rect x="20.3" y="26" width="7" height="2.7" fill="#ffffff"/></svg>
<div class="t" style="left:2540.10px;top:484.64px;font-size:25.48px;line-height:25.48px;color:#111111;font-weight:400;-webkit-text-stroke:0.6px #111111;letter-spacing:-0.500px;transform:scaleX(0.9696);transform-origin:0 0;">Ocean</div>
<svg style="left:2659.00px;top:483.50px;width:28.00px;height:28.00px;overflow:visible;" viewBox="0 0 28.00 28.00"><path d="M8.2 1.2 H19.2 V2.8 H17.8 V12 L26.6 25 Q27 26.4 25.6 26.4 H2.4 Q1 26.4 1.4 25 L10.2 12 V2.8 H8.2 Z" fill="#333333" stroke="#111" stroke-width="0.8"/></svg>
<div class="t" style="left:2707.50px;top:484.64px;font-size:25.48px;line-height:25.48px;color:#111111;font-weight:400;-webkit-text-stroke:0.6px #111111;letter-spacing:-0.500px;transform:scaleX(0.9550);transform-origin:0 0;">OLIS</div>
<svg style="left:2803.25px;top:477.70px;width:39.00px;height:39.20px;" viewBox="0 0 24 24" preserveAspectRatio="none"><path d="M19 8H5c-1.66 0-3 1.34-3 3v6h4v4h12v-4h4v-6c0-1.66-1.34-3-3-3zm-3 11H8v-5h8v5zm3-7c-.55 0-1-.45-1-1s.45-1 1-1 1 .45 1 1-.45 1-1 1zm-1-9H6v4h12V3z" fill="#222222"/></svg>
<div class="t" style="left:2857.70px;top:484.64px;font-size:25.48px;line-height:25.48px;color:#111111;font-weight:400;-webkit-text-stroke:0.6px #111111;letter-spacing:0.427px;">Print</div>
<div style="left:733.00px;top:543.50px;width:1657.00px;height:1.50px;background:#e6e6e6;"></div>
<div style="left:733.00px;top:545.00px;width:1626.00px;height:1016.00px;background:#f3f5f9;border-left:1.5px solid #e3e3e3;"></div>
<div style="left:733.00px;top:1561.00px;width:1626.00px;height:97.00px;background:#ffffff;border-top:1.5px solid #e6e8ec;border-left:1.5px solid #e3e3e3;"></div>
<div style="left:749.00px;top:545.00px;width:1594.00px;height:238.00px;background:#ffffff;border:1.5px solid #e5e5e6;border-radius:8px;border-top:none;border-top-left-radius:0;border-top-right-radius:0;"></div>
<div style="left:733.00px;top:543.50px;width:2203.00px;height:1.50px;background:#e6e6e6;"></div>
<div class="t" style="left:780.00px;top:605.94px;font-size:25.48px;line-height:25.48px;color:#141414;font-weight:400;-webkit-text-stroke:0.6px #141414;letter-spacing:-0.007px;">Closing Comment:</div>
<div class="t" style="left:780.00px;top:638.64px;font-size:25.48px;line-height:25.48px;color:#141414;font-weight:400;-webkit-text-stroke:0.6px #141414;letter-spacing:-0.052px;">Patient has acknowledged message.</div>
<div style="left:772.00px;top:709.30px;width:302.00px;height:38.20px;background:#f4f4f4;border-radius:9px;"></div>
<div class="t" style="left:783.20px;top:714.64px;font-size:25.48px;line-height:25.48px;color:#6e6e6e;font-weight:400;-webkit-text-stroke:0.2px #6e6e6e;letter-spacing:-0.188px;">Signed by Arendale, Arya</div>
<div class="t" style="left:2185.70px;top:715.04px;font-size:25.48px;line-height:25.48px;color:#3f95e5;font-weight:400;-webkit-text-stroke:0.25px #3f95e5;letter-spacing:-0.102px;">Edit</div>
<div style="left:2256.70px;top:695.30px;width:65.40px;height:65.40px;background:#f4f4f4;border-radius:50%;"></div>
<svg style="left:2267.50px;top:706.15px;width:43.80px;height:43.80px;" viewBox="0 0 24 24" preserveAspectRatio="none"><path d="M6 10c-1.1 0-2 .9-2 2s.9 2 2 2 2-.9 2-2-.9-2-2-2zm12 0c-1.1 0-2 .9-2 2s.9 2 2 2 2-.9 2-2-.9-2-2-2zm-6 0c-1.1 0-2 .9-2 2s.9 2 2 2 2-.9 2-2-.9-2-2-2z" fill="#8a8a8a"/></svg>
<div style="left:749.00px;top:798.00px;width:1594.00px;height:256.50px;background:#ffffff;border:1.5px solid #e5e5e6;border-radius:8px;"></div>
<div style="left:772.20px;top:812.90px;width:64.80px;height:64.80px;background:#edecec;border-radius:50%;"></div>
<svg style="left:783.05px;top:823.87px;width:42.80px;height:42.67px;" viewBox="0 0 24 24" preserveAspectRatio="none"><path d="M19 5v14H5V5h14m0-2H5c-1.1 0-2 .9-2 2v14c0 1.1.9 2 2 2h14c1.1 0 2-.9 2-2V5c0-1.1-.9-2-2-2z" fill="#999999"/></svg>
<svg style="left:865.67px;top:824.50px;width:42.67px;height:42.00px;" viewBox="0 0 24 24" preserveAspectRatio="none"><path d="M3 18h12v-2H3v2zM3 6v2h18V6H3zm0 7h18v-2H3v2z" fill="#141414"/></svg>
<div class="t" style="left:916.60px;top:832.64px;font-size:25.48px;line-height:25.48px;color:#141414;font-weight:400;-webkit-text-stroke:0.6px #141414;letter-spacing:0.257px;">Note</div>
<div class="t" style="left:2061.00px;top:832.64px;font-size:25.48px;line-height:25.48px;color:#8c8c8c;font-weight:400;-webkit-text-stroke:0.2px #8c8c8c;letter-spacing:-0.391px;">Sep. 19, 2023, 11:13am</div>
<div class="t" style="left:780.00px;top:910.94px;font-size:25.48px;line-height:25.48px;color:#141414;font-weight:400;-webkit-text-stroke:0.6px #141414;letter-spacing:0.539px;">testing</div>
<div style="left:772.00px;top:981.60px;width:263.60px;height:37.80px;background:#f4f4f4;border-radius:9px;"></div>
<div class="t" style="left:783.20px;top:987.14px;font-size:25.48px;line-height:25.48px;color:#6e6e6e;font-weight:400;-webkit-text-stroke:0.2px #6e6e6e;letter-spacing:-0.420px;">Signed by Wyle, Noah</div>
<div class="t" style="left:2185.70px;top:986.54px;font-size:25.48px;line-height:25.48px;color:#3f95e5;font-weight:400;-webkit-text-stroke:0.25px #3f95e5;letter-spacing:-0.102px;">Edit</div>
<div style="left:2256.70px;top:967.60px;width:65.40px;height:65.40px;background:#f4f4f4;border-radius:50%;"></div>
<svg style="left:2267.50px;top:978.45px;width:43.80px;height:43.80px;" viewBox="0 0 24 24" preserveAspectRatio="none"><path d="M6 10c-1.1 0-2 .9-2 2s.9 2 2 2 2-.9 2-2-.9-2-2-2zm12 0c-1.1 0-2 .9-2 2s.9 2 2 2 2-.9 2-2-.9-2-2-2zm-6 0c-1.1 0-2 .9-2 2s.9 2 2 2 2-.9 2-2-.9-2-2-2z" fill="#8a8a8a"/></svg>
<div style="left:749.00px;top:1070.20px;width:1594.00px;height:477.00px;background:#ffffff;border:1.5px solid #e5e5e6;border-radius:8px;"></div>
<div style="left:772.20px;top:1085.40px;width:64.80px;height:64.80px;background:#edecec;border-radius:50%;"></div>
<svg style="left:783.05px;top:1096.37px;width:42.80px;height:42.67px;" viewBox="0 0 24 24" preserveAspectRatio="none"><path d="M19 5v14H5V5h14m0-2H5c-1.1 0-2 .9-2 2v14c0 1.1.9 2 2 2h14c1.1 0 2-.9 2-2V5c0-1.1-.9-2-2-2z" fill="#999999"/></svg>
<svg style="left:865.67px;top:1097.00px;width:42.67px;height:42.00px;" viewBox="0 0 24 24" preserveAspectRatio="none"><path d="M3 18h12v-2H3v2zM3 6v2h18V6H3zm0 7h18v-2H3v2z" fill="#141414"/></svg>
<div class="t" style="left:916.60px;top:1105.14px;font-size:25.48px;line-height:25.48px;color:#141414;font-weight:400;-webkit-text-stroke:0.6px #141414;letter-spacing:0.257px;">Note</div>
<div class="t" style="left:2061.80px;top:1105.14px;font-size:25.48px;line-height:25.48px;color:#8c8c8c;font-weight:400;-webkit-text-stroke:0.2px #8c8c8c;letter-spacing:-0.429px;">Sep. 20, 2023, 11:41am</div>
<div class="t" style="left:779.90px;top:1182.64px;font-size:25.48px;line-height:25.48px;color:#141414;font-weight:400;-webkit-text-stroke:0.6px #141414;letter-spacing:-0.170px;">20-Sep-2023</div>
<div class="t" style="left:779.90px;top:1283.94px;font-size:25.48px;line-height:25.48px;color:#141414;font-weight:400;-webkit-text-stroke:0.6px #141414;letter-spacing:-0.202px;">Consultation Faxed to Elizabeth Newman (Cardiology) by Noah Wyle.</div>
<div class="t" style="left:779.90px;top:1383.84px;font-size:25.48px;line-height:25.48px;color:#141414;font-weight:400;-webkit-text-stroke:0.6px #141414;letter-spacing:0.128px;">Fax: 416 111 1122</div>
<div style="left:772.00px;top:1471.70px;width:263.60px;height:40.00px;background:#f4f4f4;border-radius:9px;"></div>
<div class="t" style="left:783.20px;top:1477.64px;font-size:25.48px;line-height:25.48px;color:#6e6e6e;font-weight:400;-webkit-text-stroke:0.2px #6e6e6e;letter-spacing:-0.420px;">Signed by Wyle, Noah</div>
<div class="t" style="left:2185.70px;top:1477.34px;font-size:25.48px;line-height:25.48px;color:#3f95e5;font-weight:400;-webkit-text-stroke:0.25px #3f95e5;letter-spacing:-0.102px;">Edit</div>
<div style="left:2256.70px;top:1458.70px;width:65.40px;height:65.40px;background:#f4f4f4;border-radius:50%;"></div>
<svg style="left:2267.50px;top:1469.55px;width:43.80px;height:43.80px;" viewBox="0 0 24 24" preserveAspectRatio="none"><path d="M6 10c-1.1 0-2 .9-2 2s.9 2 2 2 2-.9 2-2-.9-2-2-2zm12 0c-1.1 0-2 .9-2 2s.9 2 2 2 2-.9 2-2-.9-2-2-2zm-6 0c-1.1 0-2 .9-2 2s.9 2 2 2 2-.9 2-2-.9-2-2-2z" fill="#8a8a8a"/></svg>
<div style="left:2133.00px;top:1577.00px;width:210.50px;height:71.60px;background:#f4f4f4;border-radius:10px;"></div>
<svg style="left:2154.46px;top:1590.46px;width:43.37px;height:43.37px;" viewBox="0 0 24 24" preserveAspectRatio="none"><path d="M19 13h-6v6h-2v-6H5v-2h6V5h2v6h6v2z" fill="#6b6b6b"/></svg>
<div class="t" style="left:2212.80px;top:1599.64px;font-size:25.48px;line-height:25.48px;color:#6b6b6b;font-weight:400;-webkit-text-stroke:0.25px #6b6b6b;letter-spacing:-0.178px;">New Note</div>
<div style="left:2359.00px;top:545.00px;width:31.00px;height:1113.00px;background:#f9f9f9;border-left:1.5px solid #e6e6e6;border-right:1.5px solid #e6e6e6;"></div>
<div style="left:2367.00px;top:1644.00px;width:16.00px;height:30.00px;background:#c1c1c1;border-radius:8px;"></div>
<div style="left:2390.00px;top:545.00px;width:521.00px;height:1113.00px;background:#ffffff;"></div>
<div style="left:2402.00px;top:556.00px;width:500.00px;height:61.60px;background:#4aa2ed;border-bottom-left-radius:5px;border-bottom-right-radius:5px;"></div>
<div class="t" style="left:2410.60px;top:571.94px;font-size:25.48px;line-height:25.48px;color:#ffffff;font-weight:400;-webkit-text-stroke:0.8px #ffffff;letter-spacing:-0.500px;transform:scaleX(0.9399);transform-origin:0 0;">TICKLERS</div>
<div style="left:2831.10px;top:556.60px;width:56.80px;height:56.80px;background:#4599e2;border-radius:50%;"></div>
<svg style="left:2837.90px;top:563.40px;width:43.20px;height:43.20px;" viewBox="0 0 24 24" preserveAspectRatio="none"><path d="M19 13h-6v6h-2v-6H5v-2h6V5h2v6h6v2z" fill="#ffffff"/></svg>
<div style="left:2402.00px;top:617.60px;width:500.00px;height:69.40px;background:#f3f7fe;"></div>
<div style="left:2402.00px;top:687.00px;width:500.00px;height:69.60px;background:#ebf0f8;"></div>
<div style="left:2402.00px;top:756.60px;width:500.00px;height:69.40px;background:#f3f7fe;"></div>
<div style="left:2402.00px;top:826.00px;width:500.00px;height:69.30px;background:#ebf0f8;"></div>
<div style="left:2402.00px;top:895.30px;width:500.00px;height:69.30px;background:#f3f7fe;"></div>
<div style="left:2402.00px;top:964.60px;width:500.00px;height:45.90px;background:#f3f7fe;"></div>
<div class="t" style="left:2426.50px;top:639.24px;font-size:25.48px;line-height:25.48px;color:#b2302d;font-weight:400;-webkit-text-stroke:0.6px #b2302d;letter-spacing:-0.500px;transform:scaleX(0.9988);transform-origin:0 0;">Advised RTC for immun…</div>
<div class="t" style="left:2743.50px;top:631.54px;font-size:25.48px;line-height:25.48px;color:#b2302d;font-weight:400;-webkit-text-stroke:0.6px #b2302d;letter-spacing:0.111px;">2023-04-26</div>
<div class="t" style="left:2426.50px;top:708.64px;font-size:25.48px;line-height:25.48px;color:#b2302d;font-weight:400;-webkit-text-stroke:0.6px #b2302d;letter-spacing:0.477px;">test tickler</div>
<div class="t" style="left:2743.50px;top:700.94px;font-size:25.48px;line-height:25.48px;color:#b2302d;font-weight:400;-webkit-text-stroke:0.6px #b2302d;letter-spacing:0.111px;">2023-04-23</div>
<div class="t" style="left:2426.50px;top:778.24px;font-size:25.48px;line-height:25.48px;color:#b2302d;font-weight:400;-webkit-text-stroke:0.6px #b2302d;letter-spacing:-0.500px;transform:scaleX(0.9988);transform-origin:0 0;">Advised RTC for immun…</div>
<div class="t" style="left:2743.50px;top:770.54px;font-size:25.48px;line-height:25.48px;color:#b2302d;font-weight:400;-webkit-text-stroke:0.6px #b2302d;letter-spacing:0.111px;">2023-04-20</div>
<div class="t" style="left:2426.50px;top:847.64px;font-size:25.48px;line-height:25.48px;color:#b2302d;font-weight:400;-webkit-text-stroke:0.6px #b2302d;letter-spacing:-0.391px;">Message to admin to ca…</div>
<div class="t" style="left:2743.50px;top:839.94px;font-size:25.48px;line-height:25.48px;color:#b2302d;font-weight:400;-webkit-text-stroke:0.6px #b2302d;letter-spacing:0.111px;">2023-03-08</div>
<div class="t" style="left:2426.50px;top:916.94px;font-size:25.48px;line-height:25.48px;color:#b2302d;font-weight:400;-webkit-text-stroke:0.6px #b2302d;letter-spacing:0.037px;">FU with this patient</div>
<div class="t" style="left:2743.50px;top:909.24px;font-size:25.48px;line-height:25.48px;color:#b2302d;font-weight:400;-webkit-text-stroke:0.6px #b2302d;letter-spacing:0.111px;">2023-02-26</div>
<svg style="left:2846.40px;top:967.66px;width:41.20px;height:39.51px;" viewBox="0 0 24 24" preserveAspectRatio="none"><path d="M16.59 8.59L12 13.17 7.41 8.59 6 10l6 6 6-6z" fill="#111111"/></svg>
<div style="left:2397.00px;top:1032.40px;width:506.00px;height:65.60px;background:#4aa2ed;border-radius:9px;border:1px solid #3f96e6;"></div>
<div class="t" style="left:2411.30px;top:1052.74px;font-size:25.48px;line-height:25.48px;color:#ffffff;font-weight:400;-webkit-text-stroke:0.8px #ffffff;letter-spacing:-0.500px;transform:scaleX(0.9441);transform-origin:0 0;">DOCUMENTS</div>
<div style="left:2830.70px;top:1035.80px;width:56.80px;height:56.80px;background:#4599e2;border-radius:50%;"></div>
<svg style="left:2837.50px;top:1042.60px;width:43.20px;height:43.20px;" viewBox="0 0 24 24" preserveAspectRatio="none"><path d="M19 13h-6v6h-2v-6H5v-2h6V5h2v6h6v2z" fill="#ffffff"/></svg>
<div style="left:2397.00px;top:1097.40px;width:506.00px;height:70.80px;background:#f3f7fe;"></div>
<div style="left:2397.00px;top:1168.20px;width:506.00px;height:68.60px;background:#ebf0f8;"></div>
<div style="left:2397.00px;top:1236.80px;width:506.00px;height:69.90px;background:#f3f7fe;"></div>
<div style="left:2397.00px;top:1306.70px;width:506.00px;height:69.50px;background:#ebf0f8;"></div>
<div style="left:2397.00px;top:1376.20px;width:506.00px;height:68.80px;background:#f3f7fe;"></div>
<div style="left:2397.00px;top:1445.00px;width:506.00px;height:52.00px;background:#f3f7fe;"></div>
<div class="t" style="left:2426.40px;top:1119.14px;font-size:25.48px;line-height:25.48px;color:#141414;font-weight:400;-webkit-text-stroke:0.6px #141414;letter-spacing:0.955px;">Test</div>
<div class="t" style="left:2743.50px;top:1112.44px;font-size:25.48px;line-height:25.48px;color:#141414;font-weight:400;-webkit-text-stroke:0.6px #141414;letter-spacing:0.321px;">2024-11-01</div>
<div class="t" style="left:2426.40px;top:1189.94px;font-size:25.48px;line-height:25.48px;color:#141414;font-weight:400;-webkit-text-stroke:0.6px #141414;letter-spacing:-0.210px;">Leading Zero</div>
<div class="t" style="left:2743.50px;top:1181.04px;font-size:25.48px;line-height:25.48px;color:#141414;font-weight:400;-webkit-text-stroke:0.6px #141414;letter-spacing:0.111px;">2024-02-28</div>
<div class="t" style="left:2426.40px;top:1258.44px;font-size:25.48px;line-height:25.48px;color:#141414;font-weight:400;-webkit-text-stroke:0.6px #141414;letter-spacing:0.292px;">Test image</div>
<div class="t" style="left:2743.50px;top:1251.84px;font-size:25.48px;line-height:25.48px;color:#141414;font-weight:400;-webkit-text-stroke:0.6px #141414;letter-spacing:0.111px;">2023-07-24</div>
<div class="t" style="left:2426.40px;top:1328.44px;font-size:25.48px;line-height:25.48px;color:#141414;font-weight:400;-webkit-text-stroke:0.6px #141414;letter-spacing:0.184px;">Test Document</div>
<div class="t" style="left:2743.50px;top:1321.34px;font-size:25.48px;line-height:25.48px;color:#141414;font-weight:400;-webkit-text-stroke:0.6px #141414;letter-spacing:0.111px;">2023-06-06</div>
<div class="t" style="left:2426.40px;top:1397.84px;font-size:25.48px;line-height:25.48px;color:#141414;font-weight:400;-webkit-text-stroke:0.6px #141414;letter-spacing:-0.013px;">test new name</div>
<div class="t" style="left:2743.50px;top:1390.34px;font-size:25.48px;line-height:25.48px;color:#141414;font-weight:400;-webkit-text-stroke:0.6px #141414;letter-spacing:0.111px;">2023-04-25</div>
<svg style="left:2846.35px;top:1446.76px;width:40.60px;height:41.46px;" viewBox="0 0 24 24" preserveAspectRatio="none"><path d="M16.59 8.59L12 13.17 7.41 8.59 6 10l6 6 6-6z" fill="#111111"/></svg>
<div style="left:2390.00px;top:1505.00px;width:521.00px;height:1.50px;background:#e8e8e8;"></div>
<div style="left:2397.00px;top:1513.40px;width:506.00px;height:65.00px;background:#4aa2ed;border-radius:9px;border:1px solid #3f96e6;"></div>
<div class="t" style="left:2411.30px;top:1533.64px;font-size:25.48px;line-height:25.48px;color:#ffffff;font-weight:400;-webkit-text-stroke:0.8px #ffffff;letter-spacing:-0.500px;transform:scaleX(0.9187);transform-origin:0 0;">MESSENGER</div>
<div style="left:2830.70px;top:1516.80px;width:56.80px;height:56.80px;background:#4599e2;border-radius:50%;"></div>
<svg style="left:2837.50px;top:1523.60px;width:43.20px;height:43.20px;" viewBox="0 0 24 24" preserveAspectRatio="none"><path d="M19 13h-6v6h-2v-6H5v-2h6V5h2v6h6v2z" fill="#ffffff"/></svg>
<div style="left:2397.00px;top:1578.40px;width:506.00px;height:70.00px;background:#f3f7fe;"></div>
<div style="left:2397.00px;top:1648.40px;width:506.00px;height:20.00px;background:#ebf0f8;"></div>
<div style="left:2415.30px;top:1592.00px;width:466.70px;height:90.00px;background:#252e3e;border-radius:9px;border:1.5px solid #070d1a;box-shadow:0 0 10px rgba(0,0,0,0.25);"></div>
<svg style="left:2442.44px;top:1612.55px;width:30.72px;height:29.40px;" viewBox="0 0 24 24" preserveAspectRatio="none"><path d="M20 2H4c-1.1 0-1.99.9-1.99 2L2 22l4-4h14c1.1 0 2-.9 2-2V4c0-1.1-.9-2-2-2zm-2 12H6v-2h12v2zm0-3H6V9h12v2zm0-3H6V6h12v2z" fill="#ffffff"/></svg>
<div class="t" style="left:2495.00px;top:1616.65px;font-size:21px;line-height:21px;color:#ffffff;font-weight:700;letter-spacing:-0.500px;transform:scaleX(0.9771);transform-origin:0 0;">PATIENT MESSAGING</div>
<svg style="left:2751.44px;top:1609.33px;width:39.36px;height:36.80px;" viewBox="0 0 24 24" preserveAspectRatio="none"><path d="M9 5v2h6.59L4 18.59 5.41 20 17 8.41V15h2V5z" fill="#ffffff"/></svg>
<svg style="left:2817.50px;top:1608.63px;width:37.20px;height:39.51px;" viewBox="0 0 24 24" preserveAspectRatio="none"><path d="M12 8l-6 6 1.41 1.41L12 10.83l4.59 4.58L18 14z" fill="#ffffff"/></svg>
<div style="left:2911.00px;top:545.00px;width:25.00px;height:1113.00px;background:#f9f9f9;border-left:1.5px solid #e6e6e6;"></div>
<div style="left:2918.50px;top:551.00px;width:15.50px;height:805.30px;background:#c1c1c1;border-radius:8px;"></div>
<div style="left:2391.50px;top:545.80px;width:520.20px;height:474.60px;background:transparent;border:10.3px solid #e5402a;"></div>
<svg style="left:2660.00px;top:556.00px;width:175.00px;height:60.00px;overflow:visible;" viewBox="0 0 175.00 60.00"><rect x="3" y="24" width="117" height="10.5" fill="#e5402a"/><path d="M118.5 4.8 L169.3 29.5 L118.5 55.6 Z" fill="#e5402a"/></svg>
<div style="left:0.00px;top:0.00px;width:2940.00px;height:2.00px;background:#616161;"></div>
<div style="left:0.00px;top:0.00px;width:4.00px;height:1664.00px;background:#616161;"></div>
<div style="left:2936.00px;top:0.00px;width:4.00px;height:1664.00px;background:#616161;"></div>
<div style="left:0.00px;top:1658.00px;width:2940.00px;height:6.00px;background:#616161;"></div></div></body></html>
